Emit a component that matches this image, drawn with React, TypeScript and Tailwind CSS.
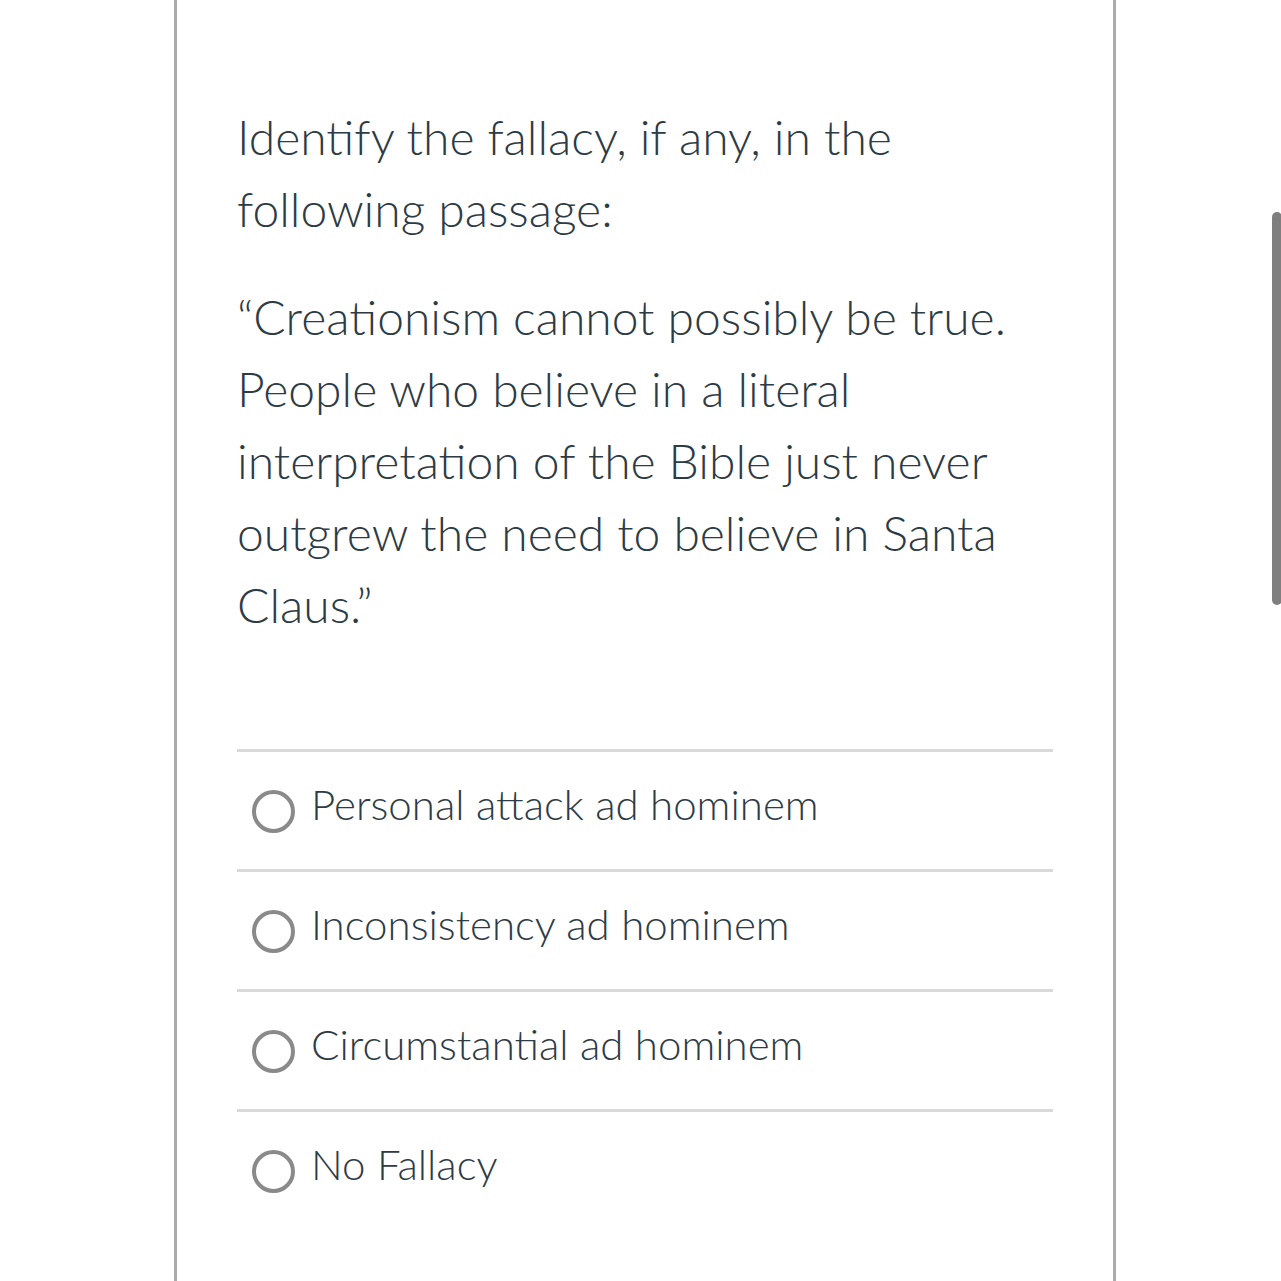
export default function App() {
  const options = [
    "Personal attack ad hominem",
    "Inconsistency ad hominem",
    "Circumstantial ad hominem",
    "No Fallacy",
  ];

  return (
    <div className="relative h-[1281px] w-full overflow-hidden bg-white font-['Lato','Liberation_Sans',sans-serif] text-[#2d3b45]">
      <div className="ml-[174px] h-full w-[942px] border-x-[3px] border-[#ababab] px-[60px] pt-[101px]">
        <p className="text-[48px] font-light leading-[72px]">
          Identify the fallacy, if any, in the following passage:
        </p>
        <p className="mt-[36px] text-[48px] font-light leading-[72px]">
          “Creationism cannot possibly be true. People who believe in a literal interpretation of the Bible just never outgrew the need to believe in Santa Claus.”
        </p>

        <div className="mt-[108px]">
          {options.map((o) => (
            <div
              key={o}
              className="flex h-[120px] items-start border-t-[3px] border-[#d9d9d9] pl-[15px] pt-[31px]"
            >
              <span className="mt-[7px] h-[43px] w-[43px] shrink-0 rounded-full border-[4px] border-[#8a8a8a]" />
              <span className="ml-[16px] text-[42px] font-light leading-[42px]">{o}</span>
            </div>
          ))}
        </div>
      </div>

      {/* scrollbar thumb */}
      <div className="absolute left-[1272px] top-[212px] h-[393px] w-[10px] rounded-full bg-[#7f7f7f]" />
    </div>
  );
}
